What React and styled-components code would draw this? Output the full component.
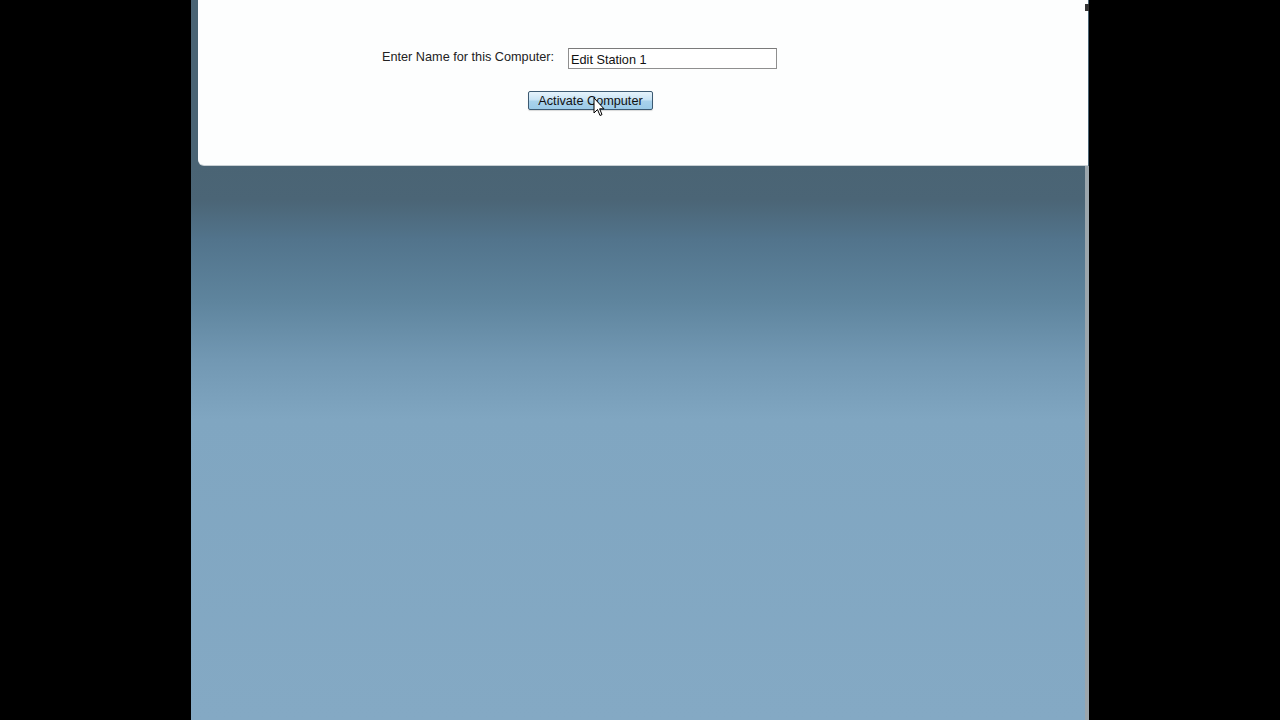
import React from "react";
import styled, { createGlobalStyle } from "styled-components";

const Global = createGlobalStyle`
  html, body { margin: 0; padding: 0; background: #000; }
  body { font-family: "Liberation Sans", Arial, sans-serif; }
`;

const Page = styled.div`
  width: 1280px;
  height: 720px;
  background: #000;
  display: flex;
  justify-content: flex-start;
  padding-left: 191px;
  box-sizing: border-box;
  overflow: hidden;
`;

const Viewport = styled.div`
  width: 898px;
  height: 720px;
  display: flex;
  flex-direction: column;
  background: linear-gradient(
    #4a6474 0px,
    #4a6474 165px,
    #4b6576 200px,
    #52748c 240px,
    #5e849d 300px,
    #7298b3 360px,
    #80a6c1 420px,
    #84a9c4 100%
  );
  position: relative;
`;

const Panel = styled.div`
  margin-left: 7px;
  margin-right: 1px;
  height: 165px;
  background: #fdfefe;
  border-bottom-left-radius: 6px;
  box-shadow: 0 1px 0 #c8d0d4;
  box-sizing: border-box;
  padding: 48px 0 0 184px;
  display: flex;
  flex-direction: column;
  gap: 22px;
  position: relative;
`;

const Row = styled.div`
  display: flex;
  align-items: center;
  gap: 14px;
`;

const Label = styled.label`
  font-size: 12.7px;
  color: #222;
  margin-top: -3px;
`;

const Input = styled.input`
  width: 209px;
  height: 21px;
  box-sizing: border-box;
  border: 1px solid #8f8f8f;
  border-top-color: #7a7a7a;
  padding: 2px 2px 0;
  font-family: "Liberation Sans", Arial, sans-serif;
  font-size: 12.7px;
  color: #111;
  background: #fff;
  outline: none;
`;

const Button = styled.button`
  margin-left: 146px;
  width: 125px;
  height: 19px;
  padding: 0;
  border: 1px solid #3c5a72;
  border-radius: 2px;
  background: linear-gradient(#e6f3fb 0%, #c9e4f5 45%, #a8d2ec 55%, #9ccbe8 100%);
  font-family: "Liberation Sans", Arial, sans-serif;
  font-size: 12.7px;
  color: #111;
  box-shadow: 0 1px 1px rgba(0, 0, 0, 0.15);
  cursor: pointer;
`;

const Scrollbar = styled.div`
  position: absolute;
  right: 0;
  top: 166px;
  bottom: 0;
  width: 4px;
  background: #9ba6ad;
`;

const TopMark = styled.div`
  position: absolute;
  right: 0;
  top: 4px;
  width: 4px;
  height: 7px;
  background: #333;
`;

const Cursor = styled.svg`
  position: absolute;
  left: 395px;
  top: 97px;
  width: 12px;
  height: 20px;
  pointer-events: none;
`;

export default function App() {
  return (
    <>
      <Global />
      <Page>
        <Viewport>
          <Panel>
            <Row>
              <Label htmlFor="name">Enter Name for this Computer:</Label>
              <Input id="name" defaultValue="Edit Station 1" />
            </Row>
            <Button type="button">Activate Computer</Button>
            <Cursor viewBox="0 0 12 20">
              <path
                d="M1 1 L1 16 L4.5 12.5 L7 18.5 L9 17.6 L6.6 11.8 L11 11.8 Z"
                fill="#fff"
                stroke="#000"
                strokeWidth="1"
                strokeLinejoin="round"
              />
            </Cursor>
          </Panel>
          <TopMark />
          <Scrollbar />
        </Viewport>
      </Page>
    </>
  );
}
